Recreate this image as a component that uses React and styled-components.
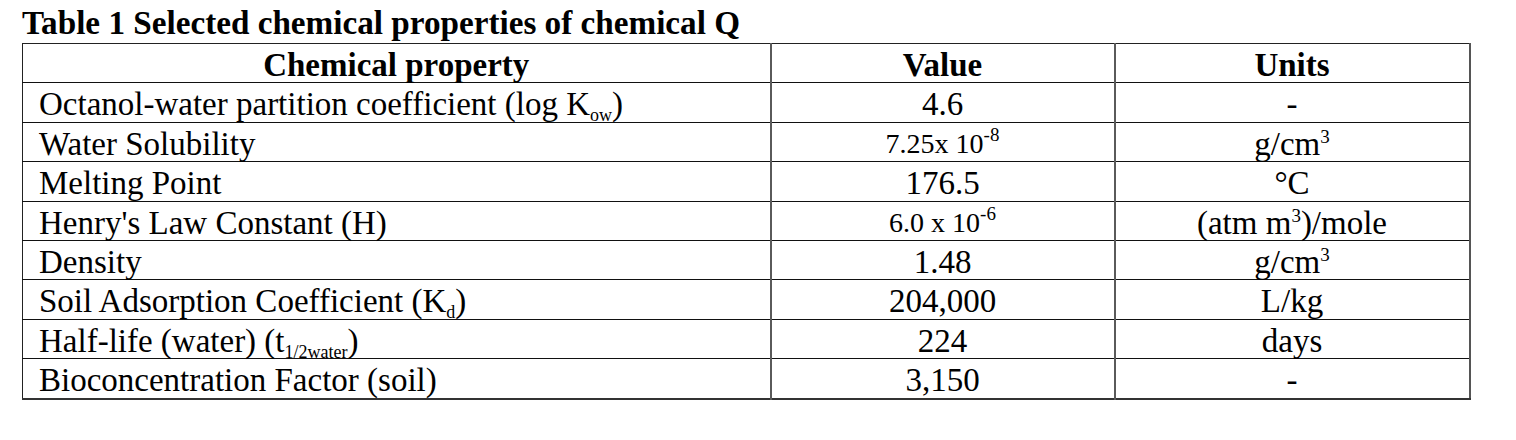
import styled, { createGlobalStyle } from "styled-components";

const GlobalStyle = createGlobalStyle`
    body {
        margin: 0;
        background: #FFFFFF;
        color: #000000;
        font-family: 'Liberation Serif', 'Times New Roman', serif;
    }
`;

function getRows() {
    return [
        { name: <>Octanol-water partition coefficient (log K<Sub>ow</Sub>)</>, value: "4.6", units: "-" },
        { name: "Water Solubility", value: <>7.25x 10<Sup>-8</Sup></>, small: true, units: <>g/cm<Sup>3</Sup></> },
        { name: "Melting Point", value: "176.5", units: "°C" },
        { name: "Henry's Law Constant (H)", value: <>6.0 x 10<Sup>-6</Sup></>, small: true, units: <>(atm m<Sup>3</Sup>)/mole</> },
        { name: "Density", value: "1.48", units: <>g/cm<Sup>3</Sup></> },
        { name: <>Soil Adsorption Coefficient (K<Sub>d</Sub>)</>, value: "204,000", units: "L/kg" },
        { name: <>Half-life (water) (t<Sub>1/2water</Sub>)</>, value: "224", units: "days" },
        { name: "Bioconcentration Factor (soil)", value: "3,150", units: "-" },
    ];
}

function App() {
    const rows = getRows();

    return (
        <Page>
            <GlobalStyle />
            <Title>Table 1 Selected chemical properties of chemical Q</Title>
            <Table>
                <colgroup>
                    <col style={{ width: "748px" }} />
                    <col style={{ width: "344px" }} />
                    <col style={{ width: "355px" }} />
                </colgroup>
                <thead>
                    <tr>
                        <HeadCell>Chemical property</HeadCell>
                        <HeadCell>Value</HeadCell>
                        <HeadCell>Units</HeadCell>
                    </tr>
                </thead>
                <tbody>
                    {rows.map((r, i) => (
                        <tr key={i}>
                            <NameCell>{r.name}</NameCell>
                            <ValueCell $small={r.small}>{r.value}</ValueCell>
                            <ValueCell>{r.units}</ValueCell>
                        </tr>
                    ))}
                </tbody>
            </Table>
        </Page>
    );
}

export default App

const Page = styled.div`
    padding-left: 22px;
`;

const Title = styled.div`
    font-weight: 700;
    font-size: 33.2px;
    line-height: 36px;
    padding-top: 5px;
    margin-bottom: 2px;
    white-space: nowrap;
`;

const Table = styled.table`
    border-collapse: collapse;
    table-layout: fixed;
    width: 1447px;
    border: 1px solid #222222;
    border-right: 2px solid #555555;
    border-bottom: 2px solid #333333;
`;

const Cell = styled.td`
    height: 34.4px;
    padding: 4px 0 0 0;
    line-height: 34.4px;
    font-size: 33px;
    border-bottom: 1px solid #111111;
    border-left: 2px solid #5a5a5a;
    white-space: nowrap;
    vertical-align: middle;
    &:first-child {
        border-left: 1px solid #222222;
    }
`;

const HeadCell = styled(Cell).attrs({ as: "th" })`
    font-weight: 700;
    font-size: 33px;
    text-align: center;
`;

const NameCell = styled(Cell)`
    text-align: left;
    padding-left: 16px;
`;

const ValueCell = styled(Cell)`
    text-align: center;
    font-size: ${(p) => (p.$small ? "28px" : "33px")};
`;

const Sub = styled.sub`
    font-size: 18px;
    line-height: 0;
    vertical-align: -6px;
`;

const Sup = styled.sup`
    font-size: 19px;
    line-height: 0;
    vertical-align: 12px;
`;
